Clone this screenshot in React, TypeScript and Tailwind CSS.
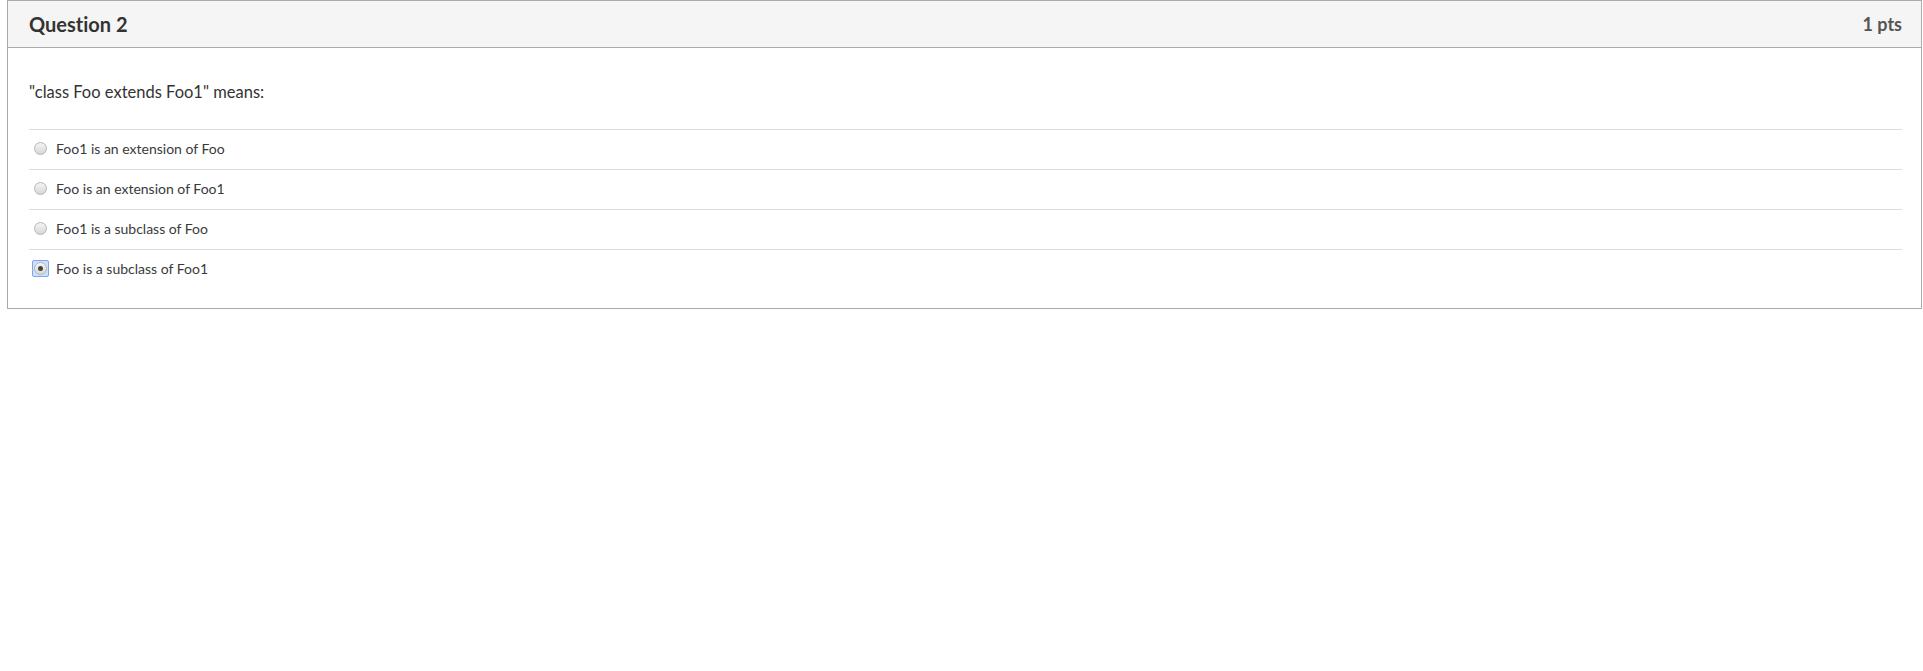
import React from "react";

const answers = [
  { text: "Foo1 is an extension of Foo", checked: false },
  { text: "Foo is an extension of Foo1", checked: false },
  { text: "Foo1 is a subclass of Foo", checked: false },
  { text: "Foo is a subclass of Foo1", checked: true },
];

function Radio({ checked }: { checked: boolean }) {
  const circle = (
    <span className="flex h-[13px] w-[13px] items-center justify-center rounded-full border border-[#b5b5b5] bg-gradient-to-b from-[#f4f4f4] to-[#d8d8d8]">
      {checked && <span className="h-[5px] w-[5px] rounded-full bg-[#444]" />}
    </span>
  );
  if (checked) {
    return (
      <span className="ml-[3px] flex h-[17px] w-[17px] items-center justify-center rounded-[2px] border border-[#7aa7f0] bg-[#cfe0fb]">
        {circle}
      </span>
    );
  }
  return <span className="ml-[5px] mr-[2px] flex">{circle}</span>;
}

export default function App() {
  return (
    <div className="min-h-[671px] bg-white font-['Lato','Open_Sans',sans-serif] text-[#2d3b45] [font-variant-ligatures:none]">
      <div className="ml-[7px] mr-[1px] border border-[#aaaaaa]">
        <div className="flex h-[47px] items-center justify-between border-b border-[#aaaaaa] bg-[#f5f5f5] pl-[21px] pr-[19px]">
          <span className="text-[20px] font-bold text-[#333]">Question 2</span>
          <span className="text-[18px] font-bold text-[#555]">1 pts</span>
        </div>
        <div className="pb-[19px] pl-[21px] pr-[19px] pt-[32px]">
          <p className="text-[16.5px] leading-[24px] text-[#333]">"class Foo extends Foo1" means:</p>
          <div className="mt-[25px]">
            {answers.map((a) => (
              <div
                key={a.text}
                className="flex h-[40px] items-center gap-[7px] border-t border-[#dddddd] pb-[2px]"
              >
                <Radio checked={a.checked} />
                <span className="text-[14px] text-[#3a3a3a]">{a.text}</span>
              </div>
            ))}
          </div>
        </div>
      </div>
    </div>
  );
}
